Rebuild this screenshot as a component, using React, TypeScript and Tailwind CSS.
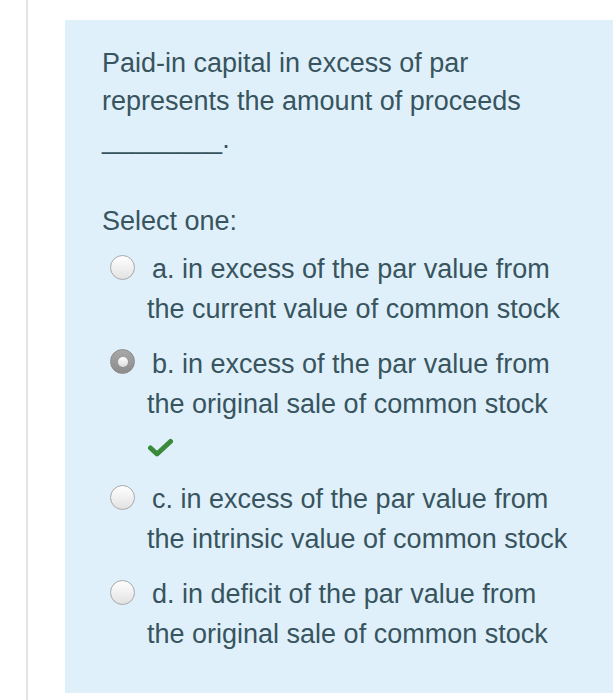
import React from "react";

function Radio({ checked }: { checked?: boolean }) {
  if (checked) {
    return (
      <span className="inline-block align-middle relative top-[-4px] w-[25px] h-[25px] rounded-full bg-gradient-to-b from-[#a8a8a8] to-[#8c8c8c] border border-[#8a8a8a] mr-[17px]">
        <span className="absolute left-1/2 top-1/2 -translate-x-1/2 -translate-y-1/2 w-[10px] h-[10px] rounded-full bg-gradient-to-b from-[#ffffff] to-[#dcdcdc]" />
      </span>
    );
  }
  return (
    <span className="inline-block align-middle relative top-[-3px] w-[25px] h-[25px] rounded-full bg-gradient-to-b from-[#ffffff] to-[#e2e2e2] border-[1.5px] border-[#a9a9a9] mr-[17px]" />
  );
}

function Option({
  letter,
  line1,
  line2,
  checked,
  correct,
}: {
  letter: string;
  line1: string;
  line2: string;
  checked?: boolean;
  correct?: boolean;
}) {
  return (
    <div className="pl-[82px] text-[27px] leading-[40px] whitespace-nowrap">
      <div className="-ml-[37px]">
        <Radio checked={checked} />
        <span>
          {letter}. {line1}
        </span>
      </div>
      <div>{line2}</div>
      {correct && (
        <div className="h-[40px] flex items-center">
          <svg width="27" height="19" viewBox="0 0 27 19" className="mt-[6px]">
            <path
              d="M3.5 10 L10 16 L23.5 3.5"
              fill="none"
              stroke="#3a8a3c"
              strokeWidth="5"
              strokeLinecap="round"
              strokeLinejoin="round"
            />
          </svg>
        </div>
      )}
    </div>
  );
}

export default function App() {
  return (
    <div
      className="w-[615px] h-[700px] bg-white overflow-hidden flex"
      style={{ fontFamily: '"Liberation Sans", Arial, sans-serif' }}
    >
      <div className="ml-[26px] w-[2px] h-full bg-[#e4e4e4] shrink-0" />
      <div className="ml-[37px] mt-[20px] w-[548px] h-[673px] bg-[#dff0fa] text-[#38545e] pt-[24px] pb-[39px]">
        <div className="pl-[37px] text-[27px] leading-[38px] whitespace-nowrap">
          <div>Paid-in capital in excess of par</div>
          <div>represents the amount of proceeds</div>
          <div>________.</div>
        </div>
        <div className="pl-[37px] mt-[43px] text-[27px] leading-[40px]">Select one:</div>
        <div className="mt-[8px] flex flex-col gap-[15px]">
          <Option
            letter="a"
            line1="in excess of the par value from"
            line2="the current value of common stock"
          />
          <Option
            letter="b"
            line1="in excess of the par value from"
            line2="the original sale of common stock"
            checked
            correct
          />
          <Option
            letter="c"
            line1="in excess of the par value from"
            line2="the intrinsic value of common stock"
          />
          <Option
            letter="d"
            line1="in deficit of the par value from"
            line2="the original sale of common stock"
          />
        </div>
      </div>
    </div>
  );
}
